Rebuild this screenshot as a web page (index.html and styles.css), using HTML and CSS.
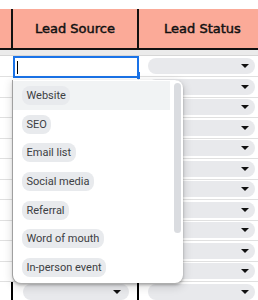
FILE: index.html
```html
<!DOCTYPE html>
<html>
<head>
<meta charset="utf-8">
<link rel="stylesheet" href="styles.css">
</head>
<body>
<div class="sheet">
  <div class="topgap"></div>
  <div class="header">
    <div class="hcell ha"></div>
    <div class="hcell hb">Lead Source</div>
    <div class="hcell hc">Lead Status</div>
  </div>
  <div class="freeze"></div>
  <div class="grid">
    <div class="cell a first"></div>
    <div class="cell b edit"><div class="editor"><span class="caret"></span><span class="handle"></span></div></div>
    <div class="cell c"><div class="pill"><span class="arrow"></span></div></div>

    <div class="cell a"></div><div class="cell b"></div><div class="cell c"><div class="pill"><span class="arrow"></span></div></div>
    <div class="cell a"></div><div class="cell b"></div><div class="cell c"><div class="pill"><span class="arrow"></span></div></div>
    <div class="cell a"></div><div class="cell b"></div><div class="cell c"><div class="pill"><span class="arrow"></span></div></div>
    <div class="cell a"></div><div class="cell b"></div><div class="cell c"><div class="pill"><span class="arrow"></span></div></div>
    <div class="cell a"></div><div class="cell b"></div><div class="cell c"><div class="pill"><span class="arrow"></span></div></div>
    <div class="cell a"></div><div class="cell b"></div><div class="cell c"><div class="pill"><span class="arrow"></span></div></div>
    <div class="cell a"></div><div class="cell b"></div><div class="cell c"><div class="pill"><span class="arrow"></span></div></div>
    <div class="cell a"></div><div class="cell b"></div><div class="cell c"><div class="pill"><span class="arrow"></span></div></div>
    <div class="cell a"></div><div class="cell b"></div><div class="cell c"><div class="pill"><span class="arrow"></span></div></div>
    <div class="cell a"></div><div class="cell b"></div><div class="cell c"><div class="pill"><span class="arrow"></span></div></div>
    <div class="cell a sel"></div><div class="cell b sel"><div class="pill bpill"><span class="arrow"></span></div></div><div class="cell c"><div class="pill"><span class="arrow"></span></div></div>
  </div>

  <div class="popup">
    <div class="list">
      <div class="item hover"><span class="chip">Website</span></div>
      <div class="item"><span class="chip">SEO</span></div>
      <div class="item"><span class="chip">Email list</span></div>
      <div class="item"><span class="chip">Social media</span></div>
      <div class="item"><span class="chip">Referral</span></div>
      <div class="item"><span class="chip">Word of mouth</span></div>
      <div class="item"><span class="chip">In-person event</span></div>
    </div>
    <div class="track"><div class="thumb"></div></div>
  </div>
</div>
</body>
</html>
```

FILE: styles.css
```css
html, body {
  margin: 0;
  padding: 0;
  overflow: hidden;
  background: #ffffff;
}
.sheet {
  position: relative;
  width: 266px;
  height: 300px;
  overflow: hidden;
}
.topgap {
  height: 9px;
  background: #ffffff;
}
.header {
  display: grid;
  grid-template-columns: 13px 126px 127px;
  height: 39px;
  background: #fbaa98;
  border-bottom: 2px solid #111;
}
.hcell {
  display: flex;
  align-items: center;
  justify-content: center;
  font-family: "DejaVu Sans", sans-serif;
  font-size: 13px;
  color: #111;
  -webkit-text-stroke: 0.45px #111;
  box-sizing: border-box;
}
.ha, .hb {
  border-right: 2px solid #111;
}
.freeze {
  height: 5px;
  background: #ebebeb;
  border-bottom: 1px solid #d6d6d6;
}
.grid {
  display: grid;
  grid-template-columns: 13px 126px 127px;
  grid-template-rows: 21px repeat(11, 20.5px);
}
.cell {
  box-sizing: border-box;
  border-bottom: 1px solid #e0e0e0;
  background: #ffffff;
  display: flex;
  align-items: center;
}
.cell.b {
  border-right: 1px solid #e0e0e0;
}
.cell.a.sel {
  border-right: 2px solid #000;
}
.cell.b.sel {
  border-right: 2px solid #000;
}
.edit {
  position: relative;
  border-bottom: none;
}
.editor {
  position: absolute;
  left: 0;
  top: 0;
  right: -1px;
  bottom: -1px;
  border: 2px solid #1a73e8;
  background: #fff;
}
.caret {
  position: absolute;
  left: 2px;
  top: 3px;
  width: 1px;
  height: 13px;
  background: #000;
}
.handle {
  position: absolute;
  right: -3px;
  bottom: -3px;
  width: 3px;
  height: 7px;
  background: #1a73e8;
}
.pill {
  flex: 1;
  height: 16px;
  margin: 0 11px 0 9px;
  border-radius: 8px;
  background: #e8e9ec;
  display: flex;
  align-items: center;
  justify-content: flex-end;
  padding-right: 6px;
}
.bpill {
  margin: 0 8px 0 10px;
  padding-right: 8px;
}
.arrow {
  width: 0;
  height: 0;
  border-left: 4px solid transparent;
  border-right: 4px solid transparent;
  border-top: 4.5px solid #111;
}
.popup {
  position: absolute;
  left: 13px;
  top: 80px;
  width: 170px;
  height: 203px;
  background: #ffffff;
  border-radius: 0 8px 8px 8px;
  box-shadow: -1px 0 0 #a0a0a0, 0 2px 3px rgba(0,0,0,0.28), 0 3px 8px 2px rgba(0,0,0,0.12);
  display: flex;
  overflow: hidden;
}
.list {
  width: 157px;
  padding-top: 1px;
  display: flex;
  flex-direction: column;
}
.item {
  height: 28.7px;
  display: flex;
  align-items: center;
  padding-left: 9px;
}
.item.hover {
  background: #f1f3f4;
}
.chip {
  height: 19px;
  line-height: 19px;
  padding: 0 4.5px;
  border-radius: 8px;
  background: #e8eaed;
  font-family: Roboto, "Noto Sans", sans-serif;
  font-size: 11px;
  color: #3c4043;
  white-space: nowrap;
}
.track {
  flex: 1;
  padding-left: 4px;
}
.thumb {
  width: 7px;
  height: 150px;
  margin-top: 3px;
  border-radius: 4px;
  background: #dadce0;
}
```
